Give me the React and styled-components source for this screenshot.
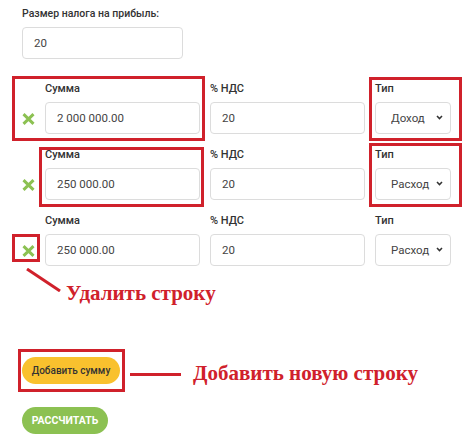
import React from 'react';
import styled, { createGlobalStyle } from 'styled-components';

const GlobalStyle = createGlobalStyle`
body {
  margin: 0;
  background: #ffffff;
  font-family: Roboto, "Liberation Sans", Arial, sans-serif;
  color: #333333;
}
`

const rows = [
  { sum: '2 000 000.00', vat: '20', type: 'Доход', marks: ['sumWide', 'type'] },
  { sum: '250 000.00', vat: '20', type: 'Расход', marks: ['sum', 'type'] },
  { sum: '250 000.00', vat: '20', type: 'Расход', marks: ['remove'] },
];

const frames = {
  sumWide: { col: '1 / 3', row: '1 / 3', m: '-6px -5px -7px -10px' },
  sum: { col: '2 / 3', row: '1 / 3', m: '-1px -4px -7px -6px' },
  type: { col: '4 / 5', row: '1 / 3', m: '-5px -11px -7px -6px' },
  remove: { col: '1 / 2', row: '2 / 3', m: '0px -5px 4px -10px' },
};

function Cross() {
  return (
    <svg width="13" height="12" viewBox="0 0 13 12">
      <path d="M1.5 1.2 L11.5 10.8 M11.5 1.2 L1.5 10.8" stroke="#8cc152" strokeWidth="3" />
    </svg>
  );
}

function Chevron() {
  return (
    <svg width="7" height="5" viewBox="0 0 7 5">
      <path d="M1 1 L3.5 3.6 L6 1" stroke="#333" strokeWidth="1.5" fill="none" />
    </svg>
  );
}

function App() {
  return (
    <>
      <GlobalStyle />
      <Page>
        <TaxLabel>Размер налога на прибыль:</TaxLabel>
        <TaxInput defaultValue="20" />

        <Rows>
          {rows.map((r, i) => (
            <Row key={i}>
              <Remove><Cross /></Remove>
              <Label $col={2}>Сумма</Label>
              <Input $col={2} defaultValue={r.sum} />
              <Label $col={3}>% НДС</Label>
              <Input $col={3} defaultValue={r.vat} />
              <Label $col={4}>Тип</Label>
              <SelectBox>
                <Select defaultValue={r.type}>
                  <option>Доход</option>
                  <option>Расход</option>
                </Select>
                <Arrow><Chevron /></Arrow>
              </SelectBox>
              {r.marks.map((m) => (
                <Frame key={m} $col={frames[m].col} $row={frames[m].row} $m={frames[m].m} />
              ))}
            </Row>
          ))}
        </Rows>

        <RemoveNote>
          <svg width="44" height="24" viewBox="0 0 44 24">
            <line x1="5" y1="1" x2="38" y2="23" stroke="#d0212b" strokeWidth="3" />
          </svg>
          <NoteText>Удалить строку</NoteText>
        </RemoveNote>

        <AddRow>
          <AddMark>
            <AddButton>Добавить сумму</AddButton>
          </AddMark>
          <Dash />
          <AddText>Добавить новую строку</AddText>
        </AddRow>

        <CalcButton>РАССЧИТАТЬ</CalcButton>
      </Page>
    </>
  );
}

export default App;


const Page = styled.div`
padding: 7px 22px 0 22px;
display: flex;
flex-direction: column;
align-items: flex-start;
`

const TaxLabel = styled.div`
font-size: 10.5px;
font-weight: 500;
line-height: 14px;
color: #333;
`

const TaxInput = styled.input`
box-sizing: border-box;
margin-top: 6px;
width: 161px;
height: 32px;
border: 1px solid #dcdcdc;
border-radius: 4px;
padding: 0 11px;
font-family: Roboto, "Liberation Sans", Arial, sans-serif;
font-size: 11.5px;
color: #444;
outline: none;
`

const Rows = styled.div`
margin-top: 23px;
display: flex;
flex-direction: column;
gap: 14px;
`

const Row = styled.div`
display: grid;
grid-template-columns: 13px 155px 155px 76px;
grid-template-rows: 14px 32px;
column-gap: 10px;
row-gap: 6px;
`

const Remove = styled.div`
grid-column: 1;
grid-row: 2;
display: flex;
align-items: center;
justify-content: center;
padding-top: 2px;
`

const Label = styled.div`
grid-column: ${(p) => p.$col};
grid-row: 1;
font-size: 11px;
font-weight: 500;
line-height: 14px;
color: #333;
`

const Input = styled.input`
grid-column: ${(p) => p.$col};
grid-row: 2;
box-sizing: border-box;
width: 100%;
height: 32px;
border: 1px solid #dcdcdc;
border-radius: 4px;
padding: 0 11px;
font-family: Roboto, "Liberation Sans", Arial, sans-serif;
font-size: 11.5px;
color: #444;
outline: none;
`

const SelectBox = styled.div`
grid-column: 4;
grid-row: 2;
position: relative;
`

const Select = styled.select`
appearance: none;
box-sizing: border-box;
width: 100%;
height: 32px;
border: 1px solid #dcdcdc;
border-radius: 4px;
background: #fff;
padding: 0 0 0 15px;
font-family: Roboto, "Liberation Sans", Arial, sans-serif;
font-size: 11.5px;
color: #444;
outline: none;
`

const Arrow = styled.span`
position: absolute;
right: 8px;
top: 13px;
display: flex;
pointer-events: none;
`

const Frame = styled.div`
grid-column: ${(p) => p.$col};
grid-row: ${(p) => p.$row};
margin: ${(p) => p.$m};
border: 3px solid #d0212b;
pointer-events: none;
z-index: 1;
`

const RemoveNote = styled.div`
margin-top: 2px;
display: flex;
align-items: flex-start;
`

const NoteText = styled.div`
margin-top: 13px;
font-family: "Liberation Serif", "Times New Roman", serif;
font-weight: 700;
font-size: 21px;
line-height: 24px;
color: #d0212b;
`

const AddRow = styled.div`
margin-top: 52px;
height: 27px;
display: flex;
align-items: center;
`

const AddMark = styled.div`
position: relative;
display: flex;

&::after {
  content: '';
  position: absolute;
  top: -8px;
  bottom: -8px;
  left: -4px;
  right: -5px;
  border: 3px solid #d0212b;
  pointer-events: none;
}
`

const AddButton = styled.button`
width: 98px;
height: 27px;
border: none;
border-radius: 14px;
background: #f9c12e;
font-family: Roboto, "Liberation Sans", Arial, sans-serif;
font-size: 10px;
font-weight: 500;
color: #333;
padding: 0;
`

const Dash = styled.div`
margin-left: 10px;
margin-top: 7px;
width: 51px;
height: 3px;
background: #d0212b;
`

const AddText = styled.div`
margin-left: 12px;
margin-top: 4px;
font-family: "Liberation Serif", "Times New Roman", serif;
font-weight: 700;
font-size: 21px;
line-height: 24px;
color: #d0212b;
white-space: nowrap;
`

const CalcButton = styled.button`
margin-top: 23px;
width: 86px;
height: 27px;
border: none;
border-radius: 14px;
background: #8cc152;
font-family: Roboto, "Liberation Sans", Arial, sans-serif;
font-size: 10.5px;
font-weight: 700;
color: #fff;
padding: 0;
`
